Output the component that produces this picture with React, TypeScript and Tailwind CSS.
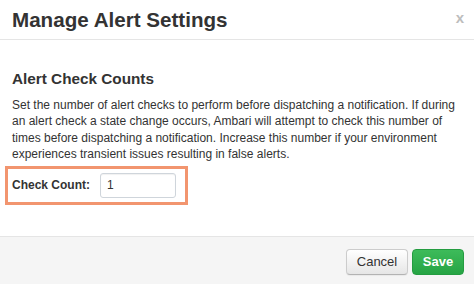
import React, { useState } from 'react';

export default function App() {
  const [count, setCount] = useState('1');

  return (
    <div className="w-[474px] h-[284px] overflow-hidden bg-white text-[#333] font-['Liberation_Sans',Arial,sans-serif]">
      {/* Header */}
      <div className="h-[40px] flex items-center justify-between pl-3 pr-[10px] border-b border-[#e5e5e5]">
        <h3 className="text-[20.6px] leading-[24px] font-bold text-[#333]">Manage Alert Settings</h3>
        <button className="text-[15px] leading-none font-bold text-[#bdbdbd] mb-[4px]">x</button>
      </div>

      {/* Body */}
      <div className="pt-[30px] pb-[31px]">
        <h4 className="px-3 text-[15.3px] leading-[18px] font-bold text-[#333]">Alert Check Counts</h4>
        <p className="px-3 mt-[9px] w-[474px] text-[12px] leading-[16.4px] text-[#333]">
          Set the number of alert checks to perform before dispatching a notification. If during an alert check a state
          change occurs, Ambari will attempt to check this number of times before dispatching a notification. Increase
          this number if your environment experiences transient issues resulting in false alerts.
        </p>

        {/* Highlighted field */}
        <div className="ml-[5px] mt-[3px] w-[183px] border-[3px] border-[#f2956f] flex items-center pl-[4px] py-[4px]">
          <label className="text-[12px] font-bold text-[#333] w-[88px] shrink-0">Check Count:</label>
          <input
            value={count}
            onChange={(e) => setCount(e.target.value)}
            className="w-[76px] h-[25px] px-[6px] text-[12px] text-[#333] border border-[#cfd5db] rounded-[3px] outline-none shadow-[inset_0_1px_1px_rgba(0,0,0,0.06)]"
          />
        </div>
      </div>

      {/* Footer */}
      <div className="h-[48px] border-t border-[#e5e5e5] bg-[#f5f5f5] flex justify-end items-start pt-[12px] pr-[10px] gap-[4px]">
        <button className="w-[62px] h-[26px] text-[13px] text-[#333] rounded-[4px] border border-[#cccccc] border-b-[#b3b3b3] bg-gradient-to-b from-white to-[#e6e6e6] shadow-[0_1px_1px_rgba(0,0,0,0.05)]">
          Cancel
        </button>
        <button className="w-[52px] h-[26px] text-[13px] font-bold text-white rounded-[4px] border border-[#249c40] bg-gradient-to-b from-[#3dbb5a] to-[#26a444]">
          Save
        </button>
      </div>
    </div>
  );
}
